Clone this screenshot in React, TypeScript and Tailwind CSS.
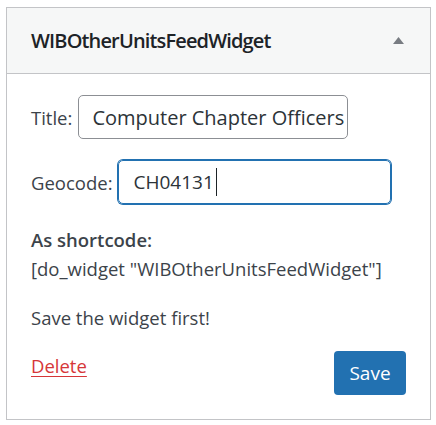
import React from 'react';

const App: React.FC = () => {
  return (
    <div
      className="min-h-screen bg-white pt-[7px] pl-[6px]"
      style={{ fontFamily: '"Open Sans", "Noto Sans", sans-serif' }}
    >
      <div className="w-[425px] h-[413px] border border-[#c3c4c7] bg-white">
        {/* header */}
        <div className="h-[66px] flex items-center justify-between pl-[24px] pr-[26px] bg-[#f6f7f7] border-b border-[#c3c4c7]">
          <h3 className="text-[20px] font-semibold tracking-[-0.85px] text-[#1d2327] leading-none">WIBOtherUnitsFeedWidget</h3>
          <svg width="11" height="7" viewBox="0 0 11 7">
            <polygon points="5.5,0 11,7 0,7" fill="#787c82" />
          </svg>
        </div>

        {/* body */}
        <div className="px-[24px] pt-[21px] text-[18.5px] leading-[29px] text-[#3c434a]">
          <div className="flex items-center">
            <label>Title:</label>
            <input
              className="ml-[6px] w-[270px] h-[44px] pl-[13px] pr-[2px] border border-[#8c8f94] rounded-[5px] text-[20px] text-[#2c3338] outline-none"
              defaultValue="Computer Chapter Officers"
            />
          </div>
          <div className="flex items-center mt-[21px]">
            <label>Geocode:</label>
            {/* focused field, caret drawn after the value */}
            <div
              role="textbox"
              className="ml-[5px] w-[273px] h-[44px] px-[15px] flex items-center border border-[#2271b1] ring-1 ring-[#2271b1] rounded-[5px] text-[19px] text-[#2c3338]"
            >
              <span>CH04131</span>
              <span className="ml-[2px] w-px h-[28px] bg-[#1d2327]" />
            </div>
          </div>
          <div className="mt-[21px]">
            <div className="font-semibold">As shortcode:</div>
            <div>[do_widget "WIBOtherUnitsFeedWidget"]</div>
          </div>
          <p className="mt-[20px]">Save the widget first!</p>
          <div className="mt-[19px] flex items-start justify-between">
            <a href="#" className="text-[#d63638] underline underline-offset-[3px]">Delete</a>
            <button className="w-[72px] h-[44px] rounded-[4px] bg-[#2271b1] text-white text-[19px]">Save</button>
          </div>
        </div>
      </div>
    </div>
  );
};

export default App;
